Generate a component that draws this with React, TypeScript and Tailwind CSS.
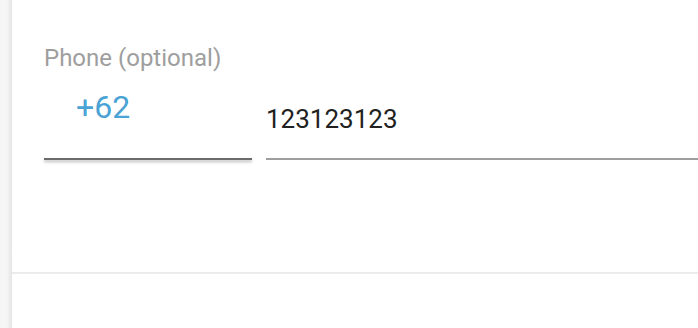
export default function App() {
  return (
    <div className="flex h-[328px] w-full overflow-hidden bg-white font-['Roboto',sans-serif]">
      {/* side strip */}
      <div className="w-3 shrink-0 bg-[linear-gradient(to_right,#f5f5f5_55%,#e4e4e4)]" />

      <div className="flex min-w-0 flex-1 flex-col">
        <div className="h-[272px] pl-8 pt-11">
          <label className="block text-[24px] leading-[28px] text-[#9e9e9e]">Phone (optional)</label>

          <div className="mt-[19px] flex h-[69px] gap-[14px]">
            {/* country code */}
            <div className="flex w-[208px] shrink-0 flex-col">
              <div className="flex-1 pl-8 text-[32px] leading-8 text-[#4aa3d4]">+62</div>
              <div className="h-0.5 bg-[#6b6b6b] shadow-[0_2px_3px_rgba(0,0,0,0.3)]" />
            </div>

            {/* number */}
            <div className="flex flex-1 flex-col">
              <div className="flex-1 pt-[15px] text-[26px] leading-[26px] text-[#212121]">123123123</div>
              <div className="h-0.5 bg-[#9e9e9e]" />
            </div>
          </div>
        </div>

        <div className="h-0.5 bg-[#ebebeb]" />
        <div className="flex-1" />
      </div>
    </div>
  );
}
